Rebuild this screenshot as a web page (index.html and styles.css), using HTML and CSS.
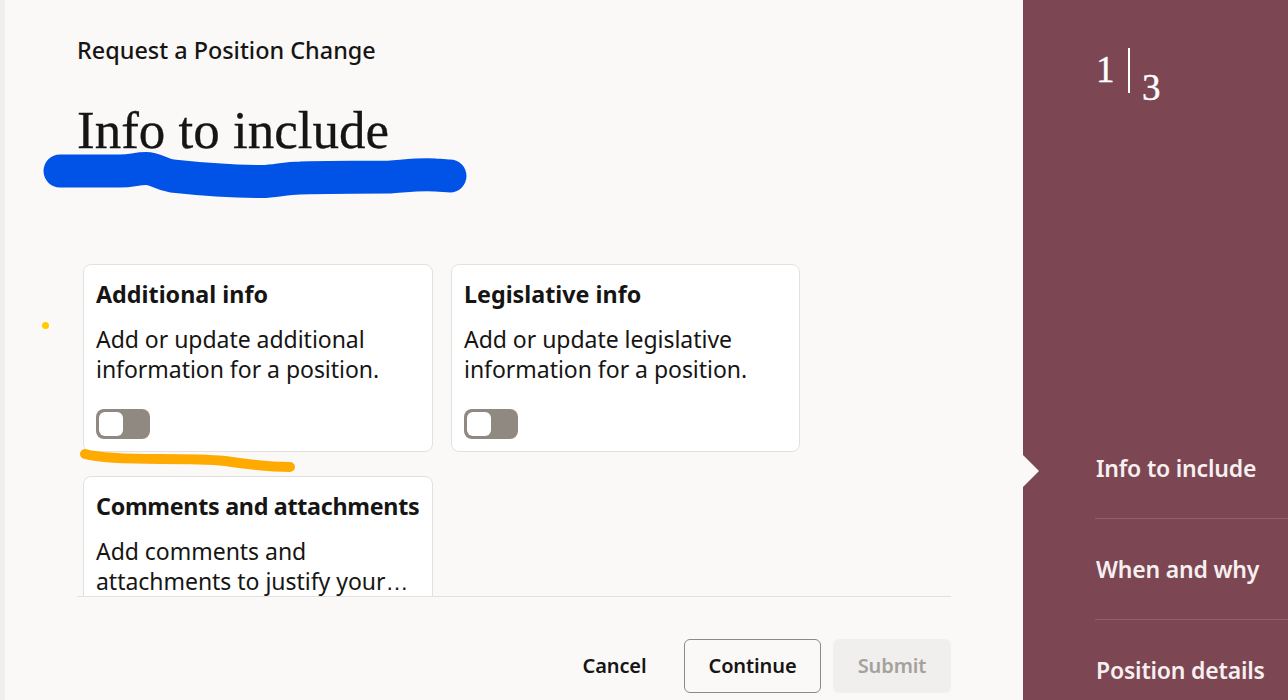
FILE: index.html
```html
<!DOCTYPE html>
<html lang="en">
<head>
<meta charset="utf-8">
<title>Request a Position Change</title>
<link rel="stylesheet" href="styles.css">
</head>
<body>
<div class="page">
  <div class="strip"></div>
  <main class="main">
    <div class="eyebrow">Request a Position Change</div>
    <h1 class="title">Info to include</h1>
    <div class="scroller">
      <div class="cards">
        <section class="card">
          <h2 class="card-title">Additional info</h2>
          <p class="card-text">Add or update additional information for a position.</p>
          <div class="switch"><span class="knob"></span></div>
        </section>
        <section class="card">
          <h2 class="card-title">Legislative info</h2>
          <p class="card-text">Add or update legislative information for a position.</p>
          <div class="switch"><span class="knob"></span></div>
        </section>
        <section class="card">
          <h2 class="card-title card-title-long">Comments and attachments</h2>
          <p class="card-text card-text-clip">Add comments and<br>attachments to justify your<span class="ellipsis">…</span></p>
        </section>
      </div>
    </div>
    <footer class="actions">
      <button class="btn btn-text">Cancel</button>
      <button class="btn btn-outline">Continue</button>
      <button class="btn btn-disabled">Submit</button>
    </footer>
  </main>
  <aside class="side">
    <div class="counter">
      <span class="cur">1</span><span class="bar"></span><span class="total">3</span>
    </div>
    <ol class="steps">
      <li class="step step-current">Info to include</li>
      <li class="step">When and why</li>
      <li class="step">Position details</li>
    </ol>
  </aside>
  <svg class="ink" width="1288" height="700" viewBox="0 0 1288 700" aria-hidden="true">
    <path class="ink-blue" d="M60 171 L120 171 C132 171 136 168.500 146 168.500 C156 168.500 160 174 172 176 C200 179 235 181.500 262 181.500 C275 181.500 285 178 300 178 C335 177 360 177 390 177 C405 176 420 174 435 175 C442 175 446 176 450 176"/>
    <path class="ink-orange" d="M85 454 C100 458 130 459 160 459 C190 459 205 459 225 461 C245 464 265 467 290 467"/>
    <circle class="ink-dot" cx="45.500" cy="325.500" r="3.500"/>
  </svg>
</div>
</body>
</html>
```
FILE: styles.css
```css
* { box-sizing: border-box; }
html, body { margin: 0; height: 100%; }
body { font-family: "Noto Sans", "Open Sans", sans-serif; color: #161513; background: #fbf9f8; overflow: hidden; }
.page { position: relative; display: flex; width: 1288px; height: 700px; overflow: hidden; }
.strip { width: 5px; background: #f1efed; flex: none; }
.main { flex: none; width: 1018px; padding: 0 72px; display: flex; flex-direction: column; }
.eyebrow { margin-top: 34px; font-size: 23.400px; line-height: 32px; font-weight: 500; white-space: nowrap; }
.title { margin: 34px 0 0; font-family: "Liberation Serif", serif; font-weight: 400; font-size: 53px; line-height: 60px; white-space: nowrap; -webkit-text-stroke: 0.3px #161513; }
.scroller { margin-top: 104px; height: 333px; overflow: hidden; border-bottom: 1px solid #e4e1dd; padding-left: 6px; }
.cards { display: grid; grid-template-columns: 350px 349px; gap: 24px 18px; align-items: start; }
.card { background: #fff; border: 1px solid #e4e1dd; border-radius: 8px; height: 188px; padding: 11px 12px 12px; }
.card-title { margin: 0; font-size: 23.300px; line-height: 36px; font-weight: 700; white-space: nowrap; }
.card-title-long { letter-spacing: -0.3px; }
.card-text { margin: 12px 0 0; font-size: 23px; line-height: 30px; width: 324px; letter-spacing: -0.03px; }
.card-text-clip { white-space: nowrap; }
.ellipsis { letter-spacing: 0; font-family: "Liberation Sans", sans-serif; }
.switch { margin-top: 25px; width: 54px; height: 30px; border-radius: 8px; background: #8f8982; padding: 3px; }
.knob { display: block; width: 24px; height: 24px; border-radius: 6px; background: #fff; }
.actions { display: flex; justify-content: flex-end; align-items: center; margin-top: 42px; gap: 12px; }
.btn { height: 54px; font-family: inherit; font-size: 20px; font-weight: 600; letter-spacing: -0.1px; border-radius: 6px; background: transparent; border: 1px solid transparent; padding: 0 0 2px; }
.btn-text { width: 115px; color: #161513; }
.btn-outline { width: 137px; border-color: #8f8982; color: #161513; }
.btn-disabled { width: 118px; background: #f1efed; color: #a5a19c; }
.side { flex: none; width: 265px; background: #7c4753; color: #fff; padding: 0 0 0 72px; position: relative; }
.counter { display: flex; font-family: "Liberation Serif", serif; font-size: 37px; height: 45px; margin: 48px 0 0 1px; -webkit-text-stroke: 0.4px #fff; }
.cur { line-height: 44px; width: 32px; }
.bar { width: 2px; height: 45px; background: #fff; }
.total { line-height: 44px; margin: 18px 0 0 12px; }
.steps { list-style: none; margin: 325px 0 0; padding: 0; }
.step { height: 101px; padding: 32px 0 0 1px; font-size: 23px; line-height: 36px; font-weight: 600; letter-spacing: -0.2px; color: #f7eff0; border-bottom: 1px solid #91626d; white-space: nowrap; }
.step-current { position: relative; }
.step-current::before { content: ""; position: absolute; left: -72px; top: 37px; border-left: 16px solid #fbf9f8; border-top: 16px solid transparent; border-bottom: 16px solid transparent; }
.ink { position: absolute; left: 0; top: 0; pointer-events: none; }
.ink-blue { fill: none; stroke: #0053e6; stroke-width: 33; stroke-linecap: round; stroke-linejoin: round; }
.ink-orange { fill: none; stroke: #ffaa00; stroke-width: 10; stroke-linecap: round; stroke-linejoin: round; }
.ink-dot { fill: #ffcc00; }
```
